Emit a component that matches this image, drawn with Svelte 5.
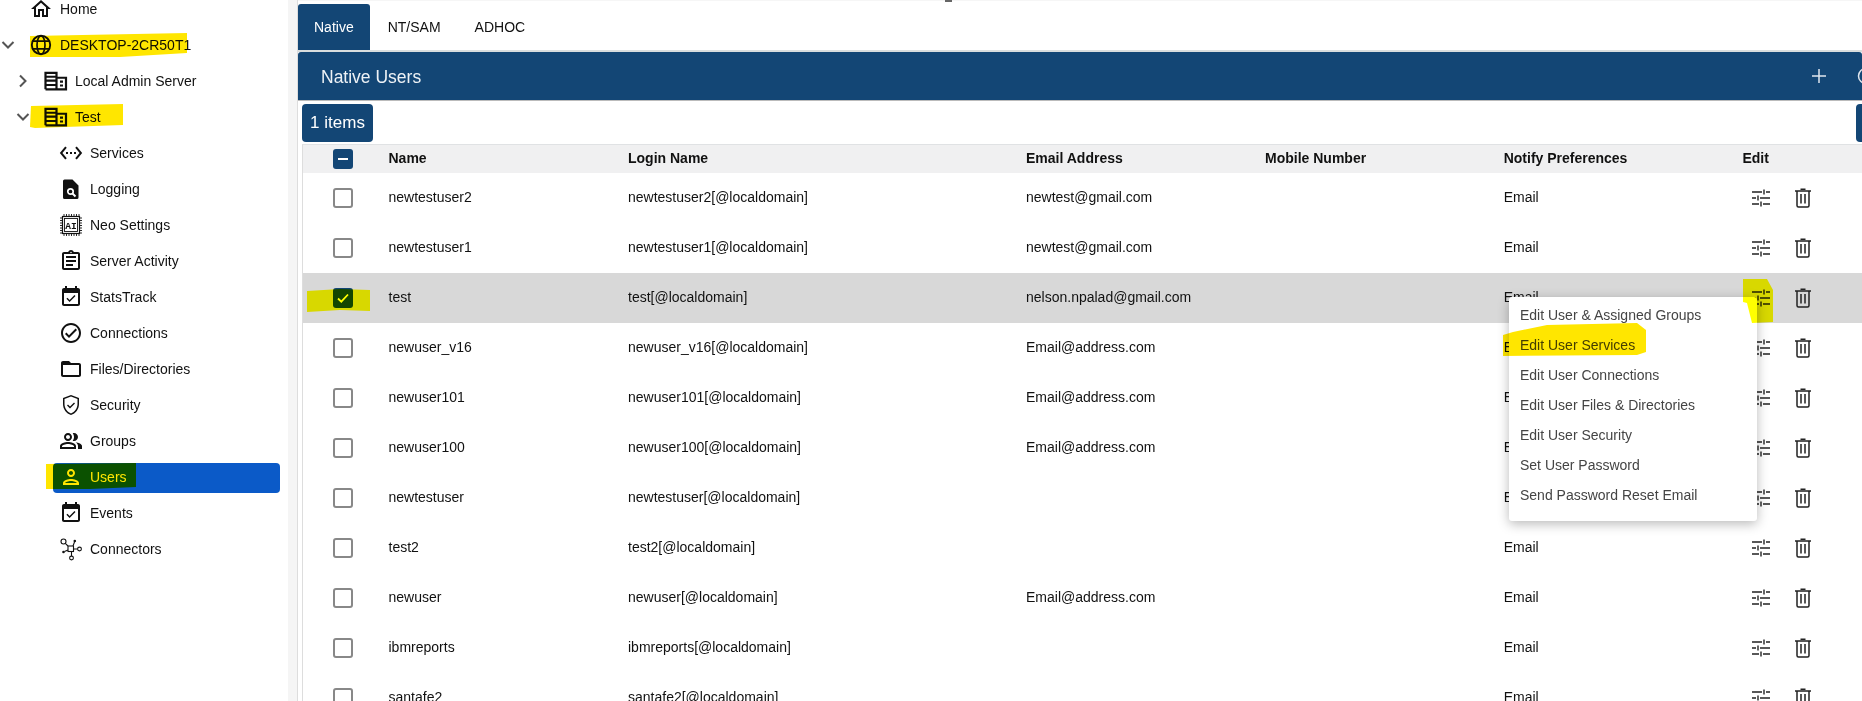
<script>
  const icons = {
    home: '<path d="M12 5.69l5 4.5V18h-2v-6H9v6H7v-7.81l5-4.5M12 3L2 12h3v8h6v-6h2v6h6v-8h3L12 3z"/>',
    globe: '<circle cx="12" cy="12" r="9.2" fill="none" stroke="currentColor" stroke-width="1.9"/><ellipse cx="12" cy="12" rx="4" ry="9.2" fill="none" stroke="currentColor" stroke-width="1.7"/><path d="M3.5 8.2h17M3.5 15.8h17" fill="none" stroke="currentColor" stroke-width="1.7"/>',
    building: '<path d="M3 21V4h11v17M14 9h9.500v12H3M3 8h11M3 12h11M3 16.500h11M17.500 13h3M17.500 17h3" transform="translate(-1.500 0) scale(1 .97)" fill="none" stroke="currentColor" stroke-width="2.200"/>',
    services: '<path d="M7.77 6.76L6.23 5.48.82 12l5.41 6.52 1.54-1.28L3.42 12l4.35-5.24zM7 13h2v-2H7v2zm10-2h-2v2h2v-2zm-6 2h2v-2h-2v2zm6.77-7.520l-1.54 1.28L20.58 12l-4.35 5.24 1.54 1.28L23.18 12l-5.41-6.52z"/>',
    logging: '<path d="M5.500 2.500h8l6 6v12a1.500 1.500 0 0 1-1.500 1.500H5.500A1.500 1.500 0 0 1 4 20.500V4a1.500 1.500 0 0 1 1.500-1.500z"/><circle cx="11.500" cy="14.500" r="2.700" fill="none" stroke="#fff" stroke-width="1.700"/><path d="M13.500 16.500l3 3" stroke="#fff" stroke-width="1.900"/>',
    chip: '<rect x="3.500" y="3.500" width="17" height="17" fill="none" stroke="currentColor" stroke-width="1.200"/><rect x="5.500" y="5.500" width="13" height="13" fill="none" stroke="currentColor" stroke-width=".9"/><path d="M5 1v2M7.500 1v2M10 1v2M12.500 1v2M15 1v2M17.500 1v2M20 1v2M5 21v2M7.500 21v2M10 21v2M12.500 21v2M15 21v2M17.500 21v2M20 21v2M1 5h2M1 7.500h2M1 10h2M1 12.500h2M1 15h2M1 17.500h2M1 20h2M21 5h2M21 7.500h2M21 10h2M21 12.500h2M21 15h2M21 17.500h2M21 20h2" stroke="currentColor" stroke-width=".9"/><text x="12" y="15.600" text-anchor="middle" font-family="Liberation Mono, monospace" font-size="9.500" font-weight="700">AI</text>',
    activity: '<path d="M7 15h7v2H7zm0-4h10v2H7zm0-4h10v2H7z"/><path d="M19 3h-4.180C14.400 1.840 13.300 1 12 1c-1.300 0-2.400.84-2.820 2H5c-1.100 0-2 .9-2 2v14c0 1.100.9 2 2 2h14c1.100 0 2-.9 2-2V5c0-1.100-.9-2-2-2zm-7-.25c.41 0 .75.34.75.75s-.34.75-.75.75-.75-.34-.75-.75.34-.75.75-.75zM19 19H5V5h14v14z"/>',
    calendar: '<path d="M16.530 11.060L15.470 10l-4.880 4.880-2.120-2.120-1.060 1.060L10.590 17l5.940-5.940zM19 3h-1V1h-2v2H8V1H6v2H5c-1.110 0-1.990.9-1.990 2L3 19c0 1.100.89 2 2 2h14c1.100 0 2-.9 2-2V5c0-1.100-.9-2-2-2zm0 16H5V8h14v11z"/>',
    check: '<path d="M12 2C6.480 2 2 6.480 2 12s4.480 10 10 10 10-4.480 10-10S17.520 2 12 2zm0 18c-4.410 0-8-3.590-8-8s3.590-8 8-8 8 3.590 8 8-3.590 8-8 8zm4.590-12.420L10 14.170l-2.590-2.580L6 13l4 4 8-8z"/>',
    folder: '<path d="M20 6h-8l-2-2H4c-1.100 0-1.990.9-1.990 2L2 18c0 1.100.9 2 2 2h16c1.100 0 2-.9 2-2V8c0-1.100-.9-2-2-2zm0 12H4V8h16v10z"/>',
    shield: '<path d="M12 2 4 5v6.090c0 5.050 3.410 9.760 8 10.910 4.590-1.150 8-5.860 8-10.910V5l-8-3zm6.500 9.090c0 4.300-2.800 8.100-6.500 9.300-3.700-1.200-6.500-5-6.500-9.300V6l6.500-2.400L18.500 6v5.090z"/><path d="M8.500 12l2.500 2.500 4.500-4.500" fill="none" stroke="currentColor" stroke-width="1.400"/>',
    groups: '<path d="M16.670 13.130C18.040 14.060 19 15.320 19 17v3h4v-3c0-2.180-3.570-3.470-6.330-3.870zM15 12c2.210 0 4-1.790 4-4s-1.790-4-4-4c-.47 0-.91.1-1.330.24C14.500 5.270 15 6.580 15 8s-.5 2.730-1.330 3.760c.42.14.86.24 1.330.24zM9 12c2.210 0 4-1.790 4-4s-1.790-4-4-4-4 1.790-4 4 1.790 4 4 4zm0-6c1.100 0 2 .9 2 2s-.9 2-2 2-2-.9-2-2 .9-2 2-2zM9 13c-2.670 0-8 1.340-8 4v3h16v-3c0-2.660-5.330-4-8-4zm6 5H3v-.99C3.200 16.290 6.300 15 9 15s5.800 1.290 6 2v1z"/>',
    user: '<path d="M12 6c1.100 0 2 .9 2 2s-.9 2-2 2-2-.9-2-2 .9-2 2-2m0 10c2.700 0 5.800 1.290 6 2H6c.23-.72 3.310-2 6-2m0-12C9.790 4 8 5.790 8 8s1.790 4 4 4 4-1.790 4-4-1.790-4-4-4zm0 10c-2.670 0-8 1.340-8 4v2h16v-2c0-2.660-5.330-4-8-4z"/>',
    hub: '<g fill="none" stroke="currentColor" stroke-width="1.100"><rect x="9" y="9" width="5.500" height="5.500"/><circle cx="4.500" cy="4.500" r="2.500"/><circle cx="20.500" cy="12" r="1.900"/><circle cx="12.500" cy="21" r="1.900"/><path d="M6.300 6.300L9 9M14.500 12h4.100M12.500 14.500v4.600M14 9l1.500-4M9 13l-3.500 1.500"/></g><circle cx="15.800" cy="4" r="1.300"/><circle cx="4.500" cy="15" r="1.300"/>'
  };

  const nav = [
    { label: 'Home', icon: 'home', level: 0 },
    { label: 'DESKTOP-2CR50T1', icon: 'globe', level: 0, chevron: 'down' },
    { label: 'Local Admin Server', icon: 'building', level: 1, chevron: 'right' },
    { label: 'Test', icon: 'building', level: 1, chevron: 'down' },
    { label: 'Services', icon: 'services', level: 2 },
    { label: 'Logging', icon: 'logging', level: 2 },
    { label: 'Neo Settings', icon: 'chip', level: 2 },
    { label: 'Server Activity', icon: 'activity', level: 2 },
    { label: 'StatsTrack', icon: 'calendar', level: 2 },
    { label: 'Connections', icon: 'check', level: 2 },
    { label: 'Files/Directories', icon: 'folder', level: 2 },
    { label: 'Security', icon: 'shield', level: 2 },
    { label: 'Groups', icon: 'groups', level: 2 },
    { label: 'Users', icon: 'user', level: 2, active: true },
    { label: 'Events', icon: 'calendar', level: 2 },
    { label: 'Connectors', icon: 'hub', level: 2 }
  ];

  const users = [
    { name: 'newtestuser2', login: 'newtestuser2[@localdomain]', email: 'newtest@gmail.com' },
    { name: 'newtestuser1', login: 'newtestuser1[@localdomain]', email: 'newtest@gmail.com' },
    { name: 'test', login: 'test[@localdomain]', email: 'nelson.npalad@gmail.com', selected: true },
    { name: 'newuser_v16', login: 'newuser_v16[@localdomain]', email: 'Email@address.com' },
    { name: 'newuser101', login: 'newuser101[@localdomain]', email: 'Email@address.com' },
    { name: 'newuser100', login: 'newuser100[@localdomain]', email: 'Email@address.com' },
    { name: 'newtestuser', login: 'newtestuser[@localdomain]', email: '' },
    { name: 'test2', login: 'test2[@localdomain]', email: '' },
    { name: 'newuser', login: 'newuser[@localdomain]', email: 'Email@address.com' },
    { name: 'ibmreports', login: 'ibmreports[@localdomain]', email: '' },
    { name: 'santafe2', login: 'santafe2[@localdomain]', email: '' }
  ];

  const menu = [
    'Edit User & Assigned Groups',
    'Edit User Services',
    'Edit User Connections',
    'Edit User Files & Directories',
    'Edit User Security',
    'Set User Password',
    'Send Password Reset Email'
  ];
</script>

<div class="page">
  <aside class="sidebar">
    <nav>
      {#each nav as item}
        <div class="row l{item.level}">
          <span class="chev">
            {#if item.chevron === 'down'}
              <svg width="16" height="16" viewBox="0 0 16 16"><path d="M2.500 5l5.500 5.500L13.500 5" fill="none" stroke="#555" stroke-width="2"/></svg>
            {:else if item.chevron === 'right'}
              <svg width="16" height="16" viewBox="0 0 16 16"><path d="M5 2.500l5.500 5.500L5 13.500" fill="none" stroke="#555" stroke-width="2"/></svg>
            {/if}
          </span>
          <div class="item" class:active={item.active}>
            <svg class="ico" viewBox="0 0 24 24" fill="currentColor">{@html icons[item.icon]}</svg>
            <span>{item.label}</span>
          </div>
        </div>
      {/each}
    </nav>
  </aside>

  <main>
    <div class="tabs">
      <button class="tab on">Native</button>
      <button class="tab">NT/SAM</button>
      <button class="tab">ADHOC</button>
    </div>

    <header class="head">
      <h1>Native Users</h1>
      <svg class="plus" width="16" height="16" viewBox="0 0 16 16"><path d="M8 1v14M1 8h14" stroke="#dfe6ee" stroke-width="1.500"/></svg>
      <svg class="ring" width="18" height="18" viewBox="0 0 18 18"><circle cx="9" cy="9" r="7.500" fill="none" stroke="#dfe6ee" stroke-width="1.500"/></svg>
    </header>

    <div class="toolbar">
      <button class="count">1 items</button>
      <button class="count side"></button>
    </div>

    <div class="table">
      <div class="grid th">
        <span class="box mixed"><i></i></span>
        <span class="cell">Name</span>
        <span class="cell">Login Name</span>
        <span class="cell">Email Address</span>
        <span class="cell">Mobile Number</span>
        <span class="cell">Notify Preferences</span>
        <span class="cell">Edit</span>
      </div>
      {#each users as u}
        <div class="grid tr" class:sel={u.selected}>
          {#if u.selected}
            <span class="box ticked">
              <svg width="16" height="16" viewBox="0 0 16 16"><path d="M3 8.500l3.300 3.200L13 4.500" fill="none" stroke="#fff" stroke-width="1.800"/></svg>
            </span>
          {:else}
            <span class="box"></span>
          {/if}
          <span class="cell">{u.name}</span>
          <span class="cell">{u.login}</span>
          <span class="cell">{u.email}</span>
          <span class="cell"></span>
          <span class="cell">Email</span>
          <span class="acts">
            <svg width="20" height="20" viewBox="0 0 20 20" fill="none" stroke="#222" stroke-width="1.400">
              <path d="M1 4h10M15 4h4M13 1.500v5M1 10h4M9 10h10M7 7.500v5M1 16h7M12 16h7M10 13.500v5"/>
            </svg>
            <svg width="18" height="20" viewBox="0 0 18 20" fill="none" stroke="#222" stroke-width="1.500">
              <path d="M1 3h16M6.500 1.200h5M3 3v14.500A1.500 1.500 0 0 0 4.500 19h9a1.500 1.500 0 0 0 1.500-1.500V3M7 6v9.500M11 6v9.500"/>
            </svg>
          </span>
        </div>
      {/each}
    </div>
  </main>

  <ul class="menu">
    {#each menu as m}
      <li>{m}</li>
    {/each}
  </ul>

  <i class="speck"></i>

  <!-- highlighter marks drawn over the screenshot -->
  <svg class="marks" width="1862" height="701" viewBox="0 0 1862 701" fill="#ffe600">
    <path d="M30 36L187 33L187 53L120 57L30 57z" />
    <path d="M31 106L123 104L123 125L35 128L30 127z" />
    <path d="M46 464L136 463V487L90 489L53 489L46 489z" />
    <path d="M307 291L340 289L370 290V311L340 310L307 312z" fill="#ffff00" />
    <path d="M1743 279H1767L1773 290V322L1752 323L1747 303L1743 302z" fill="#ffff00" />
    <path d="M1513 332L1547 325L1637 323L1646 330V352L1637 355L1503 356V335z" />
  </svg>
</div>

<style>
  :global(body) {
    margin: 0;
    background: #fff;
  }

  .page {
    position: relative;
    display: flex;
    width: 1862px;
    height: 701px;
    overflow: hidden;
    font-family: "Liberation Sans", Arial, sans-serif;
    font-size: 14px;
    color: #111;
  }

  .sidebar {
    width: 297px;
    flex: none;
    box-sizing: border-box;
    border-right: 9px solid #f5f5f5;
  }

  nav {
    margin-top: -9px;
  }

  .row {
    display: flex;
    align-items: center;
    height: 36px;
    padding-right: 8px;
  }
  .l0 { padding-left: 0; }
  .l1 { padding-left: 15px; }
  .l2 { padding-left: 30px; }

  .chev {
    width: 29px;
    flex: none;
    display: flex;
    align-items: center;
  }
  .l2 .chev { width: 23px; }

  .item {
    flex: 1;
    height: 30px;
    display: flex;
    align-items: center;
    gap: 7px;
    border-radius: 4px;
  }
  .l2 .item { padding-left: 6px; }

  .item.active {
    box-sizing: border-box;
    margin-top: 2px;
    padding-bottom: 2px;
    background: #0b5ac8;
    color: #fff;
  }

  .ico {
    width: 24px;
    height: 24px;
    flex: none;
  }

  main {
    flex: 1;
    min-width: 0;
    overflow: hidden;
    border-left: 1px solid #ddd;
  }

  .tabs {
    display: flex;
    gap: 2px;
    height: 46px;
    padding-top: 3px;
    border-top: 1px solid #f6f6f6;
    border-bottom: 2px solid #d9dddd;
  }

  .tab {
    border: 0;
    background: none;
    padding: 0 16px;
    font: inherit;
    color: #111;
    border-radius: 3px 3px 0 0;
  }
  .tab.on {
    background: #134675;
    color: #fff;
  }

  .head {
    display: flex;
    align-items: center;
    height: 48px;
    padding: 0 0 0 23px;
    background: #134675;
    border-radius: 3px 3px 0 0;
    border-bottom: 1px solid #bbb;
    color: #fff;
  }

  h1 {
    flex: 1;
    margin: 0;
    padding-top: 3px;
    font-size: 17.500px;
    font-weight: 400;
    color: #eef2f6;
  }

  .plus { margin-right: 30px; }
  .ring { margin-right: -13px; }

  .toolbar {
    display: flex;
    justify-content: space-between;
    padding: 3px 0 2px 4px;
    height: 38px;
    margin-right: -20px;
  }

  .count {
    width: 71px;
    height: 38px;
    border: 0;
    padding: 0;
    border-radius: 4px;
    background: #134675;
    color: #fff;
    font: inherit;
    font-size: 17px;
  }
  .count.side { width: 26px; }

  .table {
    margin-left: 4px;
    border-left: 1px solid #ddd;
    border-top: 1px solid #e0e2e4;
  }

  .grid {
    display: grid;
    grid-template-columns: 85.500px 239.500px 398px 239px 238.700px 238.700px 1fr;
    align-items: center;
  }

  .th {
    height: 28px;
    background: #f0f0f1;
    font-weight: 700;
    color: #111;
  }

  .tr {
    height: 50px;
  }
  .tr.sel { background: #d8d8d8; }

  .cell {
    margin-bottom: 2px;
  }

  .box {
    width: 20px;
    height: 20px;
    margin-left: 30px;
    box-sizing: border-box;
    border: 2px solid #888;
    border-radius: 3px;
    background: #fff;
    display: flex;
    align-items: center;
    justify-content: center;
  }

  .mixed, .ticked {
    border: 0;
    background: #134675;
  }
  .mixed i {
    width: 10px;
    height: 2px;
    background: #fff;
  }

  .acts {
    display: flex;
    align-items: center;
    gap: 23px;
    padding-left: 9px;
  }

  .menu {
    position: absolute;
    left: 1509px;
    top: 297px;
    width: 248px;
    height: 224px;
    box-sizing: border-box;
    margin: 0;
    padding: 3px 0 0 11px;
    list-style: none;
    background: #fff;
    border-radius: 3px;
    box-shadow: 0 3px 12px rgba(0, 0, 0, 0.28);
    color: #444;
  }

  .menu li {
    height: 30px;
    line-height: 30px;
  }

  .speck {
    position: absolute;
    left: 945px;
    top: 0;
    width: 7px;
    height: 2px;
    background: #666;
  }

  .marks {
    position: absolute;
    left: 0;
    top: 0;
    pointer-events: none;
    mix-blend-mode: multiply;
  }
</style>
